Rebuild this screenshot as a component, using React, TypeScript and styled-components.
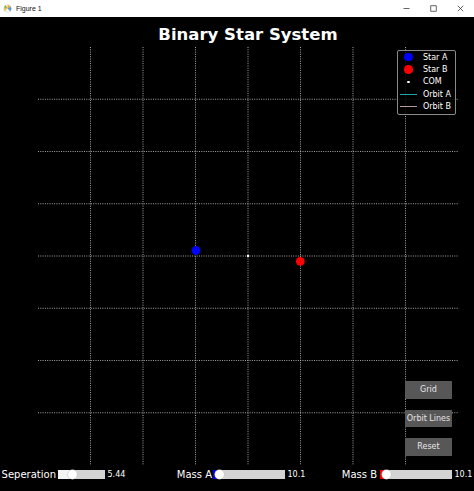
import React from 'react'
import styled, { createGlobalStyle } from 'styled-components'

const GlobalStyle = createGlobalStyle`
  html, body {
    margin: 0;
    padding: 0;
    background: #000;
  }
  body {
    font-family: "DejaVu Sans", "Liberation Sans", sans-serif;
  }
`

const PLOT_W = 420
const PLOT_H = 418
const GRID_X = [1, 2, 3, 4, 5, 6, 7].map((k) => k * 52.5)
const GRID_Y = [1, 2, 3, 4, 5, 6, 7].map((k) => k * 52.25)

const Window = styled.div`
  width: 474px;
  height: 491px;
  display: flex;
  flex-direction: column;
  overflow: hidden;
`

const TitleBar = styled.div`
  height: 17px;
  flex-shrink: 0;
  background: #fff;
  display: flex;
  align-items: center;
  padding-left: 3px;
`

const WindowTitle = styled.span`
  margin-left: 4px;
  font-family: "Liberation Sans", Arial, sans-serif;
  font-size: 7px;
  color: #111;
`

const Controls = styled.div`
  margin-left: auto;
  display: flex;
  height: 100%;
`

const ControlButton = styled.div`
  width: 27px;
  height: 100%;
  display: flex;
  align-items: center;
  justify-content: center;
`

const Figure = styled.div`
  flex: 1;
  background: #000;
  display: flex;
  flex-direction: column;
`

const PlotTitle = styled.div`
  height: 30px;
  box-sizing: border-box;
  padding-top: 6px;
  width: ${PLOT_W}px;
  margin-left: 38px;
  text-align: center;
  line-height: 24px;
  font-size: 16.5px;
  font-weight: bold;
  color: #fff;
`

const PlotArea = styled.div`
  position: relative;
  width: ${PLOT_W}px;
  height: ${PLOT_H}px;
  margin-left: 38px;
`

const Legend = styled.div`
  position: absolute;
  top: 3px;
  right: 2px;
  display: flex;
  flex-direction: column;
  padding: 0 4px 1px 2px;
  border: 1px solid #8a8a8a;
  border-radius: 2px;
  background: rgba(0, 0, 0, 0.85);
`

const LegendRow = styled.div`
  height: 12.4px;
  display: flex;
  align-items: center;
  gap: 6px;
  font-size: 8px;
  color: #fff;
`

const LegendKey = styled.div`
  width: 17px;
  height: 100%;
  display: flex;
  align-items: center;
  justify-content: center;
`

const Dot = styled.div<{ $color: string; $size: number }>`
  width: ${(p) => p.$size}px;
  height: ${(p) => p.$size}px;
  border-radius: 50%;
  background: ${(p) => p.$color};
`

const Line = styled.div<{ $color: string }>`
  width: 17px;
  height: 1px;
  background: ${(p) => p.$color};
`

const ButtonStack = styled.div`
  position: absolute;
  right: 6px;
  top: 334px;
  display: flex;
  flex-direction: column;
  gap: 11px;
`

const WidgetButton = styled.div`
  width: 47px;
  height: 17.5px;
  background: #575757;
  color: #e6e6e6;
  font-size: 8px;
  display: flex;
  align-items: center;
  justify-content: center;
  white-space: nowrap;
`

const SliderRow = styled.div`
  height: 26px;
  box-sizing: border-box;
  padding-top: 5px;
  display: flex;
  align-items: flex-start;
`

const SliderGroup = styled.div<{ $width: number }>`
  width: ${(p) => p.$width}px;
  height: 9px;
  display: flex;
  align-items: center;
  flex-shrink: 0;
`

const SliderLabel = styled.div<{ $width: number }>`
  width: ${(p) => p.$width}px;
  text-align: right;
  font-size: 10px;
  color: #fff;
  white-space: nowrap;
`

const Track = styled.div<{ $width: number; $gap: number }>`
  position: relative;
  width: ${(p) => p.$width}px;
  height: 9px;
  margin-left: ${(p) => p.$gap}px;
  background: #d3d3d3;
`

const Fill = styled.div<{ $color: string }>`
  height: 100%;
  background: ${(p) => p.$color};
`

const Knob = styled.div`
  position: absolute;
  top: 50%;
  width: 9px;
  height: 9px;
  margin-left: -4.5px;
  margin-top: -4.5px;
  border-radius: 50%;
  background: #fff;
  box-shadow: 0 0 0 0.5px #c0c0c0;
`

const SliderValue = styled.div`
  margin-left: 2.5px;
  font-size: 8px;
  color: #fff;
`

type SliderProps = {
  label: string
  labelWidth: number
  trackWidth: number
  gap: number
  groupWidth: number
  fraction: number
  fill: string
  value: string
}

const Slider = ({ label, labelWidth, trackWidth, gap, groupWidth, fraction, fill, value }: SliderProps) => {
  const pos = trackWidth * fraction
  return (
    <SliderGroup $width={groupWidth}>
      <SliderLabel $width={labelWidth}>{label}</SliderLabel>
      <Track $width={trackWidth} $gap={gap}>
        <Fill $color={fill} style={{ width: pos }} />
        <Knob style={{ left: pos }} />
      </Track>
      <SliderValue>{value}</SliderValue>
    </SliderGroup>
  )
}

const AppIcon = () => (
  <svg width="9" height="9" viewBox="0 0 10 10">
    <circle cx="5" cy="5" r="4.2" fill="none" stroke="#bbb" strokeWidth="0.5" />
    <path d="M5 5 L5 1 A4 4 0 0 1 8.5 3 Z" fill="#f5a623" />
    <path d="M5 5 L8.5 3 A4 4 0 0 1 8 8 Z" fill="#3a7bd5" opacity="0.8" />
    <path d="M5 5 L2 8 A4 4 0 0 1 1.2 4 Z" fill="#e8c547" />
    <path d="M5 5 L1.2 4 A4 4 0 0 1 3 1.5 Z" fill="#7cb342" />
  </svg>
)

const ChartSvg = () => (
  <svg width={PLOT_W} height={PLOT_H} style={{ display: 'block' }}>
    {GRID_X.map((x) => (
      <line key={`v${x}`} x1={x} y1={0} x2={x} y2={PLOT_H} stroke="#d0d0d0" strokeWidth="0.8" strokeDasharray="1 1.3" />
    ))}
    {GRID_Y.map((y) => (
      <line key={`h${y}`} x1={0} y1={y} x2={PLOT_W} y2={y} stroke="#d0d0d0" strokeWidth="0.8" strokeDasharray="1 1.3" />
    ))}
    <circle cx={158} cy={203.5} r={4.4} fill="#0000ff" />
    <circle cx={262.3} cy={214.3} r={4.4} fill="#ff0000" />
    <circle cx={210} cy={209} r={1.2} fill="#fff" />
  </svg>
)

export default function App() {
  return (
    <>
      <GlobalStyle />
      <Window>
        <TitleBar>
          <AppIcon />
          <WindowTitle>Figure 1</WindowTitle>
          <Controls>
            <ControlButton>
              <svg width="7" height="7" viewBox="0 0 7 7">
                <line x1="0.5" y1="3.5" x2="6.5" y2="3.5" stroke="#222" strokeWidth="0.7" />
              </svg>
            </ControlButton>
            <ControlButton>
              <svg width="7" height="7" viewBox="0 0 7 7">
                <rect x="0.8" y="0.8" width="5.4" height="5.4" fill="none" stroke="#222" strokeWidth="0.7" />
              </svg>
            </ControlButton>
            <ControlButton>
              <svg width="7" height="7" viewBox="0 0 7 7">
                <path d="M0.8 0.8 L6.2 6.2 M6.2 0.8 L0.8 6.2" stroke="#222" strokeWidth="0.7" />
              </svg>
            </ControlButton>
          </Controls>
        </TitleBar>
        <Figure>
          <PlotTitle>Binary Star System</PlotTitle>
          <PlotArea>
            <ChartSvg />
            <Legend>
              <LegendRow>
                <LegendKey><Dot $color="#0000ff" $size={8.6} /></LegendKey>
                Star A
              </LegendRow>
              <LegendRow>
                <LegendKey><Dot $color="#ff0000" $size={8.6} /></LegendKey>
                Star B
              </LegendRow>
              <LegendRow>
                <LegendKey><Dot $color="#ffffff" $size={2.4} /></LegendKey>
                COM
              </LegendRow>
              <LegendRow>
                <LegendKey><Line $color="#1fa6a6" /></LegendKey>
                Orbit A
              </LegendRow>
              <LegendRow>
                <LegendKey><Line $color="#b69c9c" /></LegendKey>
                Orbit B
              </LegendRow>
            </Legend>
            <ButtonStack>
              <WidgetButton>Grid</WidgetButton>
              <WidgetButton>Orbit Lines</WidgetButton>
              <WidgetButton>Reset</WidgetButton>
            </ButtonStack>
          </PlotArea>
          <SliderRow>
            <Slider label="Seperation" labelWidth={56} trackWidth={47} gap={2} groupWidth={140} fraction={0.31} fill="#f4f4f4" value="5.44" />
            <Slider label="Mass A" labelWidth={72} trackWidth={72} gap={1} groupWidth={170} fraction={0.097} fill="#0000ff" value="10.1" />
            <Slider label="Mass B" labelWidth={67} trackWidth={72} gap={3} groupWidth={164} fraction={0.097} fill="#ff0000" value="10.1" />
          </SliderRow>
        </Figure>
      </Window>
    </>
  )
}
